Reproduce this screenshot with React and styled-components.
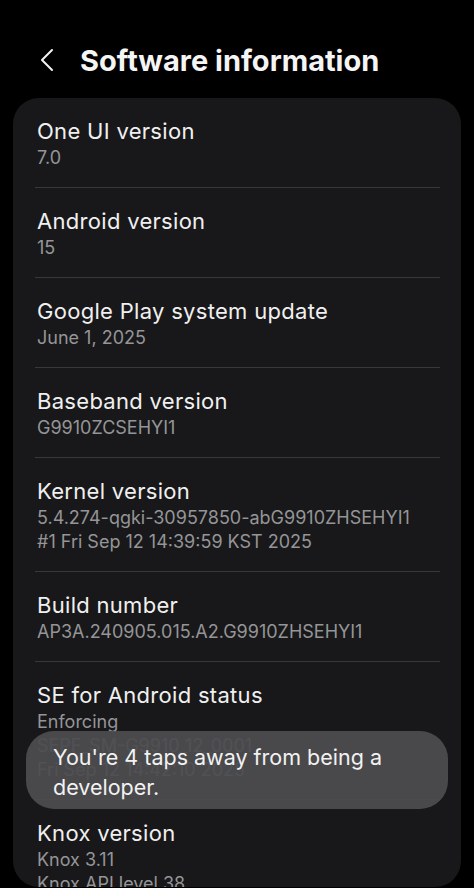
import React from 'react'
import styled, { createGlobalStyle } from 'styled-components'

const GlobalStyle = createGlobalStyle`
  html, body {
    margin: 0;
    padding: 0;
    background: #000;
  }
  body {
    font-family: Inter, "Noto Sans", sans-serif;
    -webkit-font-smoothing: antialiased;
  }
`

const Screen = styled.div`
  position: relative;
  width: 474px;
  height: 888px;
  overflow: hidden;
  background: #000;
  display: flex;
  flex-direction: column;
`

const Header = styled.div`
  height: 98px;
  display: flex;
  align-items: center;
  padding: 22px 0 0 36px;
  box-sizing: border-box;
  gap: 22px;
`

const BackButton = styled.button`
  width: 22px;
  height: 30px;
  padding: 0;
  border: none;
  background: none;
  display: flex;
  align-items: center;
  justify-content: center;
  color: #f2f2f2;
`

const Title = styled.h1`
  margin: 0;
  font-size: 29px;
  font-weight: 700;
  color: #f5f5f5;
`

const Card = styled.div`
  margin: 0 13px;
  height: 789px;
  background: #18181a;
  border-radius: 26px;
  overflow: hidden;
`

const Row = styled.div`
  margin: 0 21px 0 22px;
  padding: 19px 2px 17px;
  border-bottom: ${p => (p.last ? 'none' : '1.5px solid #38383b')};
`

const ItemTitle = styled.div`
  font-size: 22px;
  line-height: 29px;
  letter-spacing: 0.3px;
  color: #f0f0f0;
`

const ItemSub = styled.div`
  font-size: 18px;
  line-height: 24px;
  color: #959597;
`

const Toast = styled.div`
  position: absolute;
  left: 26px;
  top: 731px;
  width: 422px;
  height: 78px;
  box-sizing: border-box;
  padding: 12px 20px 0 27px;
  border-radius: 28px;
  background: rgba(76, 76, 80, 0.94);
  color: #f2f2f2;
  font-size: 21.5px;
  line-height: 29.5px;
`

const items = [
  { title: 'One UI version', lines: ['7.0'] },
  { title: 'Android version', lines: ['15'] },
  { title: 'Google Play system update', lines: ['June 1, 2025'] },
  { title: 'Baseband version', lines: ['G9910ZCSEHYI1'] },
  {
    title: 'Kernel version',
    lines: ['5.4.274-qgki-30957850-abG9910ZHSEHYI1', '#1 Fri Sep 12 14:39:59 KST 2025'],
  },
  { title: 'Build number', lines: ['AP3A.240905.015.A2.G9910ZHSEHYI1'] },
  {
    title: 'SE for Android status',
    lines: ['Enforcing', 'SEPF_SM-G9910_12_0001', 'Fri Sep 12 14:42:10 2025'],
  },
  { title: 'Knox version', lines: ['Knox 3.11', 'Knox API level 38', 'Knox ML level 1'] },
]

function App() {
  return (
    <Screen>
      <GlobalStyle />
      <Header>
        <BackButton aria-label="Back">
          <svg width="14" height="24" viewBox="0 0 14 24" fill="none">
            <path d="M12 2 L2 12 L12 22" stroke="currentColor" strokeWidth="2" strokeLinecap="round" strokeLinejoin="round" />
          </svg>
        </BackButton>
        <Title>Software information</Title>
      </Header>
      <Card>
        {items.map((it, i) => (
          <Row key={it.title} last={i === items.length - 1}>
            <ItemTitle>{it.title}</ItemTitle>
            {it.lines.map(l => (
              <ItemSub key={l}>{l}</ItemSub>
            ))}
          </Row>
        ))}
      </Card>
      <Toast>You're 4 taps away from being a developer.</Toast>
    </Screen>
  )
}

export default App
